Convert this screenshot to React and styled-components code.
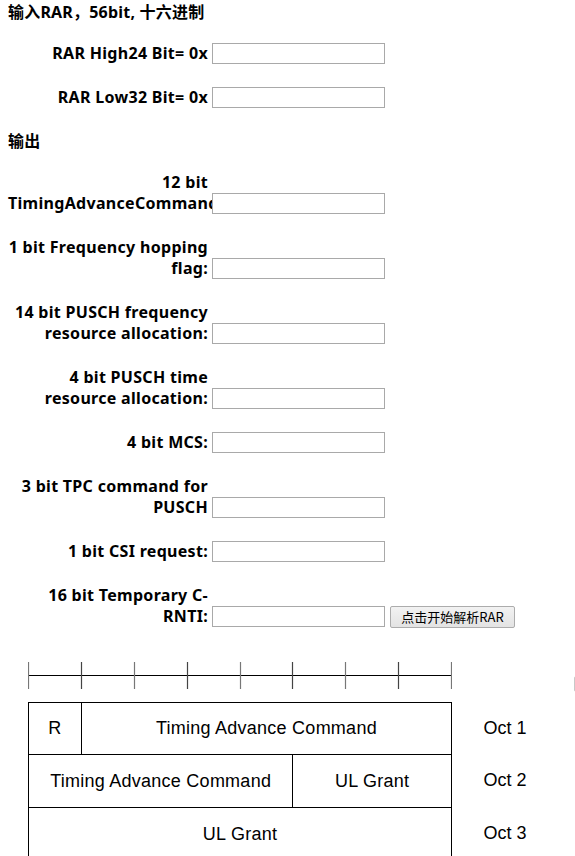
import React from "react";
import styled, { createGlobalStyle } from "styled-components";

const Global = createGlobalStyle`
  html, body { margin: 0; padding: 0; overflow: hidden; background: #fff; }
  body { font-family: "Noto Sans", "Noto Sans CJK SC", sans-serif; color: #000; }
`;

const Page = styled.div`
  padding: 2px 8px 0 8px;
  width: 575px;
  box-sizing: border-box;
`;

const Heading = styled.div`
  font-weight: bold;
  font-size: 16px;
  line-height: 21px;
  margin-bottom: 20px;
  white-space: nowrap;
  letter-spacing: 0.2px;
`;

const Row = styled.div`
  display: flex;
  align-items: flex-end;
  margin-bottom: 23px;
`;

const Label = styled.div`
  width: 200px;
  flex: none;
  text-align: right;
  font-weight: bold;
  font-size: 16px;
  line-height: 21px;
  letter-spacing: 0.3px;
`;

const Input = styled.input`
  box-sizing: border-box;
  width: 173px;
  height: 21px;
  margin: 0 0 0 4px;
  padding: 1px 2px;
  border: 1px solid #a9a9a9;
  background: #fff;
  font-size: 13px;
  flex: none;
  outline: none;
  position: relative;
`;

const Button = styled.button`
  box-sizing: border-box;
  height: 22px;
  width: 125px;
  margin: 0 0 -1px 5px;
  padding: 0 6px;
  border: 1px solid #acacac;
  border-radius: 2px;
  background: linear-gradient(#f2f2f2, #e3e3e3);
  font-family: "Noto Sans CJK SC", "Liberation Sans", sans-serif;
  font-size: 13px;
  line-height: 20px;
  color: #000;
  flex: none;
  white-space: nowrap;
`;

const DiagramArea = styled.div`
  display: flex;
  align-items: flex-start;
  margin-top: 35px;
  padding-left: 20px;
`;

const DiagramColumn = styled.div`
  width: 424px;
  flex: none;
`;

const Ruler = styled.svg`
  display: block;
  width: 424px;
  height: 27px;
  margin-bottom: 13px;
`;

const Table = styled.div`
  display: grid;
  grid-template-columns: repeat(8, 1fr);
  grid-template-rows: 52px 53px 53px;
  width: 424px;
  box-sizing: border-box;
  border-left: 1px solid #000;
  border-top: 1px solid #000;
`;

const Cell = styled.div`
  grid-column: span ${(p) => p.$span};
  display: flex;
  align-items: center;
  justify-content: center;
  border-right: 1px solid #000;
  border-bottom: 1px solid #000;
  font-family: "Liberation Sans", Arial, sans-serif;
  font-size: 18px;
  letter-spacing: 0.25px;
  white-space: nowrap;
`;

const OctColumn = styled.div`
  width: 106px;
  flex: none;
  padding-top: 40px;
  display: grid;
  grid-template-rows: 52px 53px 53px;
`;

const Oct = styled.div`
  display: flex;
  align-items: center;
  justify-content: center;
  font-family: "Liberation Sans", Arial, sans-serif;
  font-size: 18px;
`;

const EdgeBox = styled.div`
  flex: none;
  margin: 14px 0 0 16px;
  width: 10px;
  height: 14px;
  border: 1px solid #c8c8c8;
  border-radius: 2px;
`;

const rows = [
  ["RAR High24 Bit= 0x"],
  ["RAR Low32 Bit= 0x"],
];

const outputs = [
  "12 bit TimingAdvanceCommand",
  "1 bit Frequency hopping flag:",
  "14 bit PUSCH frequency resource allocation:",
  "4 bit PUSCH time resource allocation:",
  "4 bit MCS:",
  "3 bit TPC command for PUSCH",
  "1 bit CSI request:",
  "16 bit Temporary C-RNTI:",
];

export default function App() {
  const step = 423 / 8;
  return (
    <>
      <Global />
      <Page>
        <Heading>输入RAR，56bit, 十六进制</Heading>
        {rows.map(([l]) => (
          <Row key={l}>
            <Label>{l}</Label>
            <Input type="text" />
          </Row>
        ))}
        <Heading>输出</Heading>
        {outputs.map((l, i) => (
          <Row key={l}>
            <Label>{l}</Label>
            <Input type="text" />
            {i === outputs.length - 1 && <Button>点击开始解析RAR</Button>}
          </Row>
        ))}
        <DiagramArea>
          <DiagramColumn>
            <Ruler viewBox="0 0 424 27">
              <line x1="0" y1="13.5" x2="424" y2="13.5" stroke="#000" strokeWidth="1" />
              {Array.from({ length: 9 }).map((_, i) => {
                const x = Math.min(423.5, Math.round(i * step) + 0.5);
                return (
                  <line key={i} x1={x} y1="0" x2={x} y2="27" stroke={i % 2 ? "#444" : "#777"} strokeWidth="1.2" />
                );
              })}
            </Ruler>
            <Table>
              <Cell $span={1}>R</Cell>
              <Cell $span={7}>Timing Advance Command</Cell>
              <Cell $span={5}>Timing Advance Command</Cell>
              <Cell $span={3}>UL Grant</Cell>
              <Cell $span={8}>UL Grant</Cell>
            </Table>
          </DiagramColumn>
          <OctColumn>
            <Oct>Oct 1</Oct>
            <Oct>Oct 2</Oct>
            <Oct>Oct 3</Oct>
          </OctColumn>
          <EdgeBox />
        </DiagramArea>
      </Page>
    </>
  );
}
